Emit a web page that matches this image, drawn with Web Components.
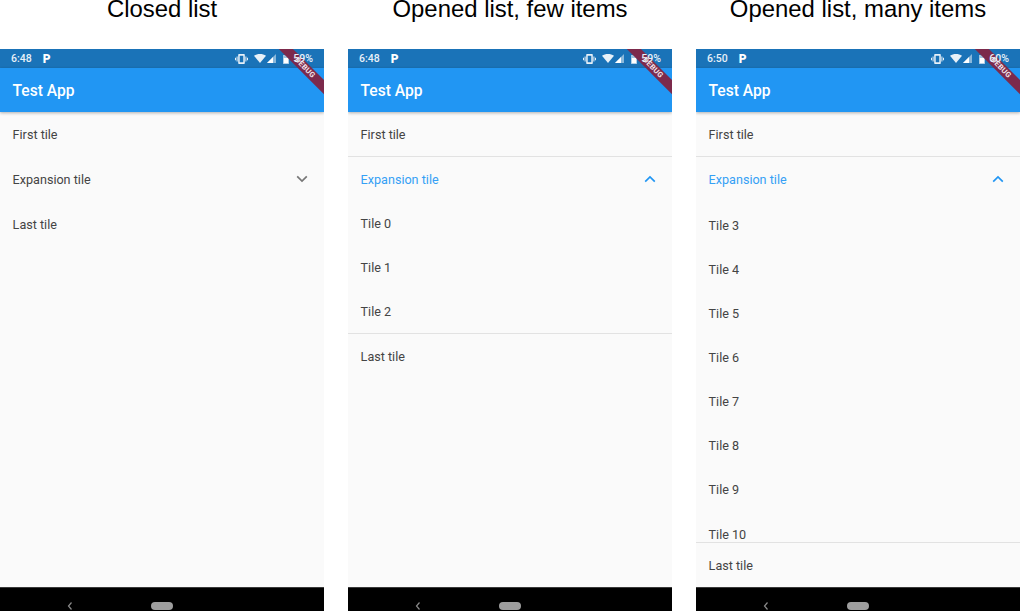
<!DOCTYPE html>
<html>
<head>
<meta charset="utf-8">
<title>Expansion list</title>
<style>
  html, body { margin: 0; background: #fff; }
  body { font-family: Roboto, sans-serif; }
  .screens { display: grid; grid-template-columns: repeat(3, 324px); gap: 24px; width: 1020px; }
</style>
</head>
<body>
<div class="screens">
  <phone-demo heading="Closed list" time="6:48" battery="59%">
    <list-tile>First tile</list-tile>
    <expansion-tile title="Expansion tile"></expansion-tile>
    <list-tile>Last tile</list-tile>
  </phone-demo>

  <phone-demo heading="Opened list, few items" time="6:48" battery="59%">
    <list-tile>First tile</list-tile>
    <expansion-tile title="Expansion tile" open>
      <list-tile>Tile 0</list-tile>
      <list-tile>Tile 1</list-tile>
      <list-tile>Tile 2</list-tile>
    </expansion-tile>
    <list-tile>Last tile</list-tile>
  </phone-demo>

  <phone-demo heading="Opened list, many items" time="6:50" battery="60%">
    <list-tile>First tile</list-tile>
    <expansion-tile title="Expansion tile" open scroll>
      <list-tile>Tile 3</list-tile>
      <list-tile>Tile 4</list-tile>
      <list-tile>Tile 5</list-tile>
      <list-tile>Tile 6</list-tile>
      <list-tile>Tile 7</list-tile>
      <list-tile>Tile 8</list-tile>
      <list-tile>Tile 9</list-tile>
      <list-tile>Tile 10</list-tile>
    </expansion-tile>
    <list-tile>Last tile</list-tile>
  </phone-demo>
</div>

<script>
class StatusBar extends HTMLElement {
    constructor() {
        super();
        this.attachShadow({ mode: "open" });
    }

    connectedCallback() {
        const time = this.getAttribute("time");
        const battery = this.getAttribute("battery");

        this.shadowRoot.innerHTML = `
            <style>
                :host {
                    display: flex;
                    align-items: center;
                    height: 19px;
                    padding: 0 11px;
                    background: #1a73b8;
                    color: #e8f1f8;
                    font-size: 10.5px;
                    font-weight: 500;
                }
                .pin {
                    margin-left: 11px;
                    font-size: 12px;
                    font-weight: 900;
                    color: #fff;
                }
                .icons {
                    margin-left: auto;
                    display: flex;
                    align-items: center;
                }
                svg { display: block; fill: #e8f1f8; }
                /* the percentage stays readable on top of the debug banner */
                .level { position: relative; z-index: 3; margin-left: 4px; }
            </style>
            <span>${time}</span>
            <span class="pin">P</span>
            <div class="icons">
                <!-- vibrate -->
                <svg width="13" height="10" viewBox="0 0 13 10">
                    <path d="M4 0h5a.8.8 0 0 1 .8.8v8.4a.8.8 0 0 1-.8.8H4a.8.8 0 0 1-.8-.8V.8A.8.8 0 0 1 4 0zm.7 1.8v6.4h3.6V1.8z"/>
                    <path d="M1.6 2.5h1v5h-1zM10.4 2.5h1v5h-1zM0 3.8h1v2.4H0zM12 3.8h1v2.4h-1z"/>
                </svg>
                <!-- wifi -->
                <svg width="12" height="9" viewBox="0 0 12 9" style="margin-left:6px">
                    <path d="M0 1.8C3.4-.6 8.6-.6 12 1.8L6 9z"/>
                </svg>
                <!-- signal -->
                <svg width="9" height="9" viewBox="0 0 9 9" style="margin-left:1px">
                    <path d="M9 0v9H0z" opacity=".55"/>
                    <path d="M6 3v6H0z" style="fill:#fff"/>
                </svg>
                <!-- battery -->
                <svg width="6" height="10" viewBox="0 0 6 10" style="margin-left:7px">
                    <path d="M2 0h2v1h2v9H0V1h2z" opacity=".65"/>
                    <path d="M.8 4h4.4v5.2H.8z" style="fill:#fff"/>
                </svg>
                <span class="level">${battery}</span>
            </div>
        `;
    }
}

class AppBar extends HTMLElement {
    constructor() {
        super();
        this.attachShadow({ mode: "open" });
        this.shadowRoot.innerHTML = `
            <style>
                :host {
                    display: flex;
                    align-items: center;
                    position: relative;
                    z-index: 1;
                    box-sizing: border-box;
                    height: 44px;
                    padding: 1px 12.6px 0;
                    background: #2196f3;
                    color: #fff;
                    font-size: 15.6px;
                    font-weight: 500;
                    box-shadow: 0 1px 3px rgba(0, 0, 0, 0.3);
                }
            </style>
            <slot></slot>
        `;
    }
}

class ListTile extends HTMLElement {
    constructor() {
        super();
        this.attachShadow({ mode: "open" });
        this.shadowRoot.innerHTML = `
            <style>
                :host {
                    display: flex;
                    align-items: center;
                    flex: none;
                    height: var(--tile-height, 44px);
                    padding: 0 12.6px;
                    font-size: 12.6px;
                    color: #444;
                }
            </style>
            <slot></slot>
        `;
    }
}

class ExpansionTile extends HTMLElement {
    constructor() {
        super();
        this.attachShadow({ mode: "open" });
    }

    connectedCallback() {
        const title = this.getAttribute("title");
        const chevron = this.hasAttribute("open") ? "M1.2 6.6 6 2l4.8 4.6" : "M1.2 1.4 6 6l4.8-4.6";

        this.shadowRoot.innerHTML = `
            <style>
                :host {
                    display: flex;
                    flex-direction: column;
                    flex: none;
                    font-size: 12.6px;
                    color: #444;
                    border-top: 1px solid transparent;
                    border-bottom: 1px solid transparent;
                }
                :host([open]) { border-color: #e2e2e2; }
                :host([scroll]) {
                    --tile-height: 44.15px;
                    flex: 1;
                    min-height: 0;
                }
                .head {
                    display: flex;
                    align-items: center;
                    justify-content: space-between;
                    flex: none;
                    height: 44px;
                    padding: 0 16px 0 12.6px;
                }
                :host([open]) .head { color: #35a0f5; }
                :host([open]) svg { stroke: #2196f3; }
                svg { fill: none; stroke: #777; stroke-width: 1.7; }
                .body { display: none; }
                :host([open]) .body { display: block; }
                :host([scroll]) .body {
                    flex: 1;
                    min-height: 0;
                    overflow: hidden;
                    padding-top: 2px;
                }
            </style>
            <div class="head">
                <span>${title}</span>
                <svg width="12" height="8" viewBox="0 0 12 8"><path d="${chevron}"/></svg>
            </div>
            <div class="body"><slot></slot></div>
        `;
    }
}

class DebugBanner extends HTMLElement {
    constructor() {
        super();
        this.attachShadow({ mode: "open" });
        this.shadowRoot.innerHTML = `
            <style>
                :host {
                    position: absolute;
                    top: 14px;
                    right: -26px;
                    width: 90px;
                    height: 9.5px;
                    display: flex;
                    align-items: center;
                    justify-content: center;
                    transform: rotate(45deg);
                    background: #7c2a4c;
                    color: #f3e4ea;
                    font-size: 7.5px;
                    font-weight: 700;
                    letter-spacing: .3px;
                    z-index: 2;
                }
            </style>
            DEBUG
        `;
    }
}

class PhoneDemo extends HTMLElement {
    constructor() {
        super();
        this.attachShadow({ mode: "open" });
    }

    connectedCallback() {
        const heading = this.getAttribute("heading");
        const time = this.getAttribute("time");
        const battery = this.getAttribute("battery");

        this.shadowRoot.innerHTML = `
            <style>
                :host { display: block; }
                h2 {
                    margin: 0;
                    height: 49px;
                    text-align: center;
                    /* reference heading sits right against the top edge */
                    font: 400 23.9px/18px "Liberation Sans", Arial, sans-serif;
                    color: #000;
                }
                .phone {
                    position: relative;
                    overflow: hidden;
                    display: flex;
                    flex-direction: column;
                    height: 562px;
                    background: #fafafa;
                }
                main {
                    flex: 1;
                    min-height: 0;
                    display: flex;
                    flex-direction: column;
                }
                .nav {
                    flex: none;
                    display: flex;
                    align-items: flex-end;
                    gap: 77px;
                    height: 24px;
                    box-sizing: border-box;
                    padding: 0 0 1px 66px;
                    background: #000;
                    border-top: 1px solid #3a3a3a;
                }
                .back { width: 8px; height: 8px; stroke: #8a8a8a; fill: none; stroke-width: 1.2; }
                .home { width: 22px; height: 8px; border-radius: 4px; background: #9e9e9e; }
            </style>
            <h2>${heading}</h2>
            <div class="phone">
                <status-bar time="${time}" battery="${battery}"></status-bar>
                <app-bar>Test App</app-bar>
                <main><slot></slot></main>
                <div class="nav">
                    <svg class="back" viewBox="0 0 8 8"><path d="M5.5 .5 2.5 4l3 3.5"/></svg>
                    <div class="home"></div>
                </div>
                <debug-banner></debug-banner>
            </div>
        `;
    }
}

customElements.define("status-bar", StatusBar);
customElements.define("app-bar", AppBar);
customElements.define("list-tile", ListTile);
customElements.define("expansion-tile", ExpansionTile);
customElements.define("debug-banner", DebugBanner);
customElements.define("phone-demo", PhoneDemo);
</script>
</body>
</html>
